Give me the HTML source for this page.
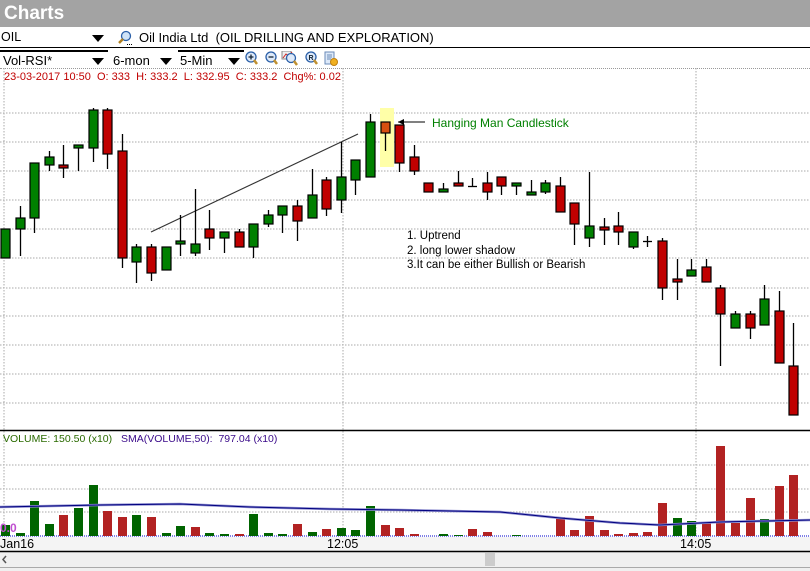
<!DOCTYPE html>
<html><head><meta charset="utf-8"><style>
body{margin:0;width:810px;height:571px;overflow:hidden;background:#fff;font-family:"Liberation Sans",sans-serif;position:relative}
.hd{position:absolute;left:0;top:0;width:810px;height:27px;background:#a3a3a3;color:#fff;font:bold 19px "Liberation Sans",sans-serif;line-height:27px;padding-left:4px;box-sizing:border-box}
.t{position:absolute;font-size:12px;color:#000;white-space:nowrap}
.arr{position:absolute;width:0;height:0;border-left:6px solid transparent;border-right:6px solid transparent;border-top:7px solid #000}
</style></head><body>
<div class="hd">Charts</div>
<div class="t" style="left:1px;top:30px;font-size:12.5px">OIL</div>
<div class="arr" style="left:92px;top:35px"></div>
<svg style="position:absolute;left:117px;top:30px" width="16" height="16"><circle cx="9" cy="6" r="4.5" fill="#cfe3f7" stroke="#2a5fa8" stroke-width="1.3"/><line x1="6" y1="9" x2="2" y2="13" stroke="#b08020" stroke-width="2.5"/><rect x="10" y="14" width="1" height="1" fill="#000"/><rect x="12" y="14" width="1" height="1" fill="#000"/><rect x="14" y="14" width="1" height="1" fill="#000"/></svg>
<div class="t" style="left:139px;top:30px;font-size:13px">Oil India Ltd&nbsp; (OIL DRILLING AND EXPLORATION)</div>
<div style="position:absolute;left:0;top:47px;width:810px;height:1px;background:#000"></div>
<div style="position:absolute;left:0;top:50px;width:108px;height:2px;background:#000"></div>
<div style="position:absolute;left:178px;top:50px;width:66px;height:2px;background:#000"></div>
<div class="t" style="left:3px;top:53px;font-size:13px">Vol-RSI*</div>
<div class="arr" style="left:92px;top:58px"></div>
<div class="t" style="left:113px;top:53px;font-size:13px">6-mon</div>
<div class="arr" style="left:160px;top:58px"></div>
<div class="t" style="left:180px;top:53px;font-size:13px">5-Min</div>
<div class="arr" style="left:228px;top:58px"></div>
<svg style="position:absolute;left:244px;top:51px" width="95" height="17">
<g><circle cx="7" cy="6" r="5" fill="#dde9f9" stroke="#2a5fa8" stroke-width="1.3"/><path d="M4.5 6h5M7 3.5v5" stroke="#123" stroke-width="1.3"/><line x1="10" y1="9" x2="13" y2="13" stroke="#c09030" stroke-width="2.5"/></g>
<g transform="translate(20,0)"><circle cx="7" cy="6" r="5" fill="#dde9f9" stroke="#2a5fa8" stroke-width="1.3"/><path d="M4.5 6h5" stroke="#123" stroke-width="1.3"/><line x1="10" y1="9" x2="13" y2="13" stroke="#c09030" stroke-width="2.5"/></g>
<g transform="translate(38,0)"><rect x="0" y="0" width="9" height="8" fill="#eee" stroke="#888"/><path d="M1 7l3-4 3 2 3-4" stroke="#c22" fill="none"/><circle cx="9" cy="7" r="4.5" fill="#dde9f9" stroke="#2a5fa8" stroke-width="1.3"/><line x1="12" y1="10" x2="15" y2="14" stroke="#c09030" stroke-width="2.5"/></g>
<g transform="translate(60,0)"><circle cx="7" cy="6" r="5" fill="#dde9f9" stroke="#2a5fa8" stroke-width="1.3"/><text x="4.5" y="9" font-size="7" font-weight="bold" fill="#123" font-family="Liberation Sans">R</text><line x1="10" y1="9" x2="13" y2="13" stroke="#c09030" stroke-width="2.5"/></g>
<g transform="translate(80,0)"><rect x="1" y="1" width="9" height="12" fill="#dde9f9" stroke="#6a8ab8"/><path d="M3 4h5M3 6h5M3 8h4" stroke="#6a8ab8"/><circle cx="10" cy="11" r="3.5" fill="#f0b020" stroke="#c08010"/></g>
</svg>
<div style="position:absolute;left:0;top:68px;width:810px;border-top:1px dotted #999"></div>
<div class="t" style="left:4px;top:71px;font-size:11px;color:#c00000">23-03-2017 10:50&nbsp; O: 333&nbsp; H: 333.2&nbsp; L: 332.95&nbsp; C: 333.2&nbsp; Chg%: 0.02</div>
<svg id="ch" style="position:absolute;left:0;top:0" width="810" height="571"></svg>
<div class="t" style="left:3px;top:433px;font-size:10.5px;color:#2a6a00">VOLUME: 150.50 (x10)</div>
<div class="t" style="left:121px;top:433px;font-size:10.5px;color:#3a0a8a">SMA(VOLUME,50):&nbsp; 797.04 (x10)</div>
<div class="t" style="left:0;top:521px;font-size:12px;font-weight:bold;color:#c050d0">0.0</div>
<div class="t" style="left:0;top:537px;font-size:12.5px">Jan16</div>
<div class="t" style="left:327px;top:537px;font-size:12.5px">12:05</div>
<div class="t" style="left:680px;top:537px;font-size:12.5px">14:05</div>
<div class="t" style="left:407px;top:229px;font-size:11.5px;line-height:14.5px">1. Uptrend<br>2. long lower shadow<br>3.It can be either Bullish or Bearish</div>
<div class="t" style="left:432px;top:116px;font-size:12px;color:#008000">Hanging Man Candlestick</div>
<script>
var s='';
function L(a,b,c,d,st,w,da){s+='<line x1="'+a+'" y1="'+b+'" x2="'+c+'" y2="'+d+'" stroke="'+st+'" stroke-width="'+(w||1)+'"'+(da?' stroke-dasharray="'+da+'"':'')+'/>';}
s+='<rect x="0" y="551" width="810" height="20" fill="#f0f0f0"/><rect x="0" y="537" width="810" height="14" fill="#f4f4f4"/>';
[113,142,171,200,229,258,288,316,345,374,403].forEach(function(y){L(0,y,810,y,'#aaa',1,'1.5,1.5')});
[465,489,512].forEach(function(y){L(0,y,810,y,'#aaa',1,'1.5,1.5')});
[4,343,696].forEach(function(x){L(x,68,x,536,'#aaa',1,'1.5,1.5')});
L(0,430.5,810,430.5,'#000',1.5);L(0,536,810,536,'#00c',1,'1,1');L(0,551.5,810,551.5,'#000',1.5);L(0,567.5,810,567.5,'#aaa',1);
s+='<rect x="485" y="553" width="10" height="13" fill="#ccc"/><path d="M6 556l-3 3.5 3 3.5" stroke="#555" stroke-width="1.5" fill="none"/>';
s+='<rect x="380" y="108" width="14" height="59" fill="#ffffa8"/>';
L(151,232,358,134,'#333',1.2);L(398,122,425,122,'#000',1);s+='<path d="M398 122l6-3v6z"/>';
var C=[[1,229,258,229,258],[1,218,229,206,256],[1,163,218,163,233],[1,157,165,151,171],[0,165,168,145,178],[1,145,148,145,171],[1,110,148,108,162],[0,110,154,108,169],[0,151,258,134,268],[1,247,262,244,283],[0,247,273,244,281],[1,247,270,247,270],[1,241,244,215,256],[1,244,253,189,256],[0,229,238,210,250],[1,232,238,232,253],[0,232,247,229,247],[1,224,247,224,258],[1,215,224,210,227],[1,206,215,206,233],[0,206,221,200,241],[1,195,218,169,218],[0,180,209,177,216],[1,177,200,142,213],[1,160,180,160,195],[1,122,177,114,177],[2,122,133,122,151],[0,125,163,125,172],[0,157,171,145,175],[0,183,192,183,192],[1,189,192,183,192],[0,183,186,171,186],[3,186,186,178,186],[0,183,192,172,200],[0,177,186,177,195],[1,183,186,183,195],[1,192,194,180,194],[1,183,192,180,194],[0,186,212,177,212],[0,203,224,203,245],[1,226,238,172,247],[0,227,229,218,245],[0,226,232,212,245],[1,232,247,232,249],[3,241,241,236,247],[0,241,288,238,300],[0,279,282,259,300],[1,270,276,259,276],[0,267,282,259,282],[0,288,314,285,366],[1,314,328,311,328],[0,314,328,311,339],[1,299,325,285,325],[0,311,363,291,363],[0,366,415,323,415]];
var V=[[1,525],[1,533],[1,501],[1,524],[0,515],[1,508],[1,485],[0,511],[0,517],[1,515],[0,517],[1,533],[1,526],[0,527],[1,533],[1,534],[0,534],[1,514],[1,533],[1,534],[0,524],[1,532],[0,529],[1,528],[1,530],[1,506],[0,525],[0,528],[0,534],null,[1,534],[1,535],[0,529],[0,532],null,[1,535],null,null,[0,517],[0,530],[0,516],[0,530],[0,534],[0,533],[0,532],[0,503],[1,518],[1,521],[0,522],[0,446],[0,523],[0,498],[1,519],[0,486],[0,475]];
var col=['#c00000','#008000','#d85010','#000'];
for(var i=0;i<C.length;i++){var x=Math.round(5+i*14.6),c=C[i];
L(x+.5,c[3],x+.5,c[4],'#000',1.3);
if(c[0]==3)L(x-4,c[1]+.5,x+5,c[1]+.5,'#000',1.3);else s+='<rect x="'+(x-4)+'" y="'+c[1]+'" width="9" height="'+Math.max(c[2]-c[1],3)+'" fill="'+col[c[0]]+'" stroke="#000" stroke-width="1.2"/>';
var v=V[i];if(v)s+='<rect x="'+(x-4)+'" y="'+v[1]+'" width="9" height="'+(536-v[1])+'" fill="'+(v[0]?'#006400':'#b22222')+'"/>';}
s+='<path d="M0 507L100 505L180 504L250 507L330 509L400 510L500 512L560 518L620 523L660 525L720 522L810 520" fill="none" stroke="#9090d0" stroke-width="2.5"/><path d="M0 507L100 505L180 504L250 507L330 509L400 510L500 512L560 518L620 523L660 525L720 522L810 520" fill="none" stroke="#000080" stroke-width="1"/>';
document.getElementById('ch').innerHTML=s;
</script>
</body></html>
